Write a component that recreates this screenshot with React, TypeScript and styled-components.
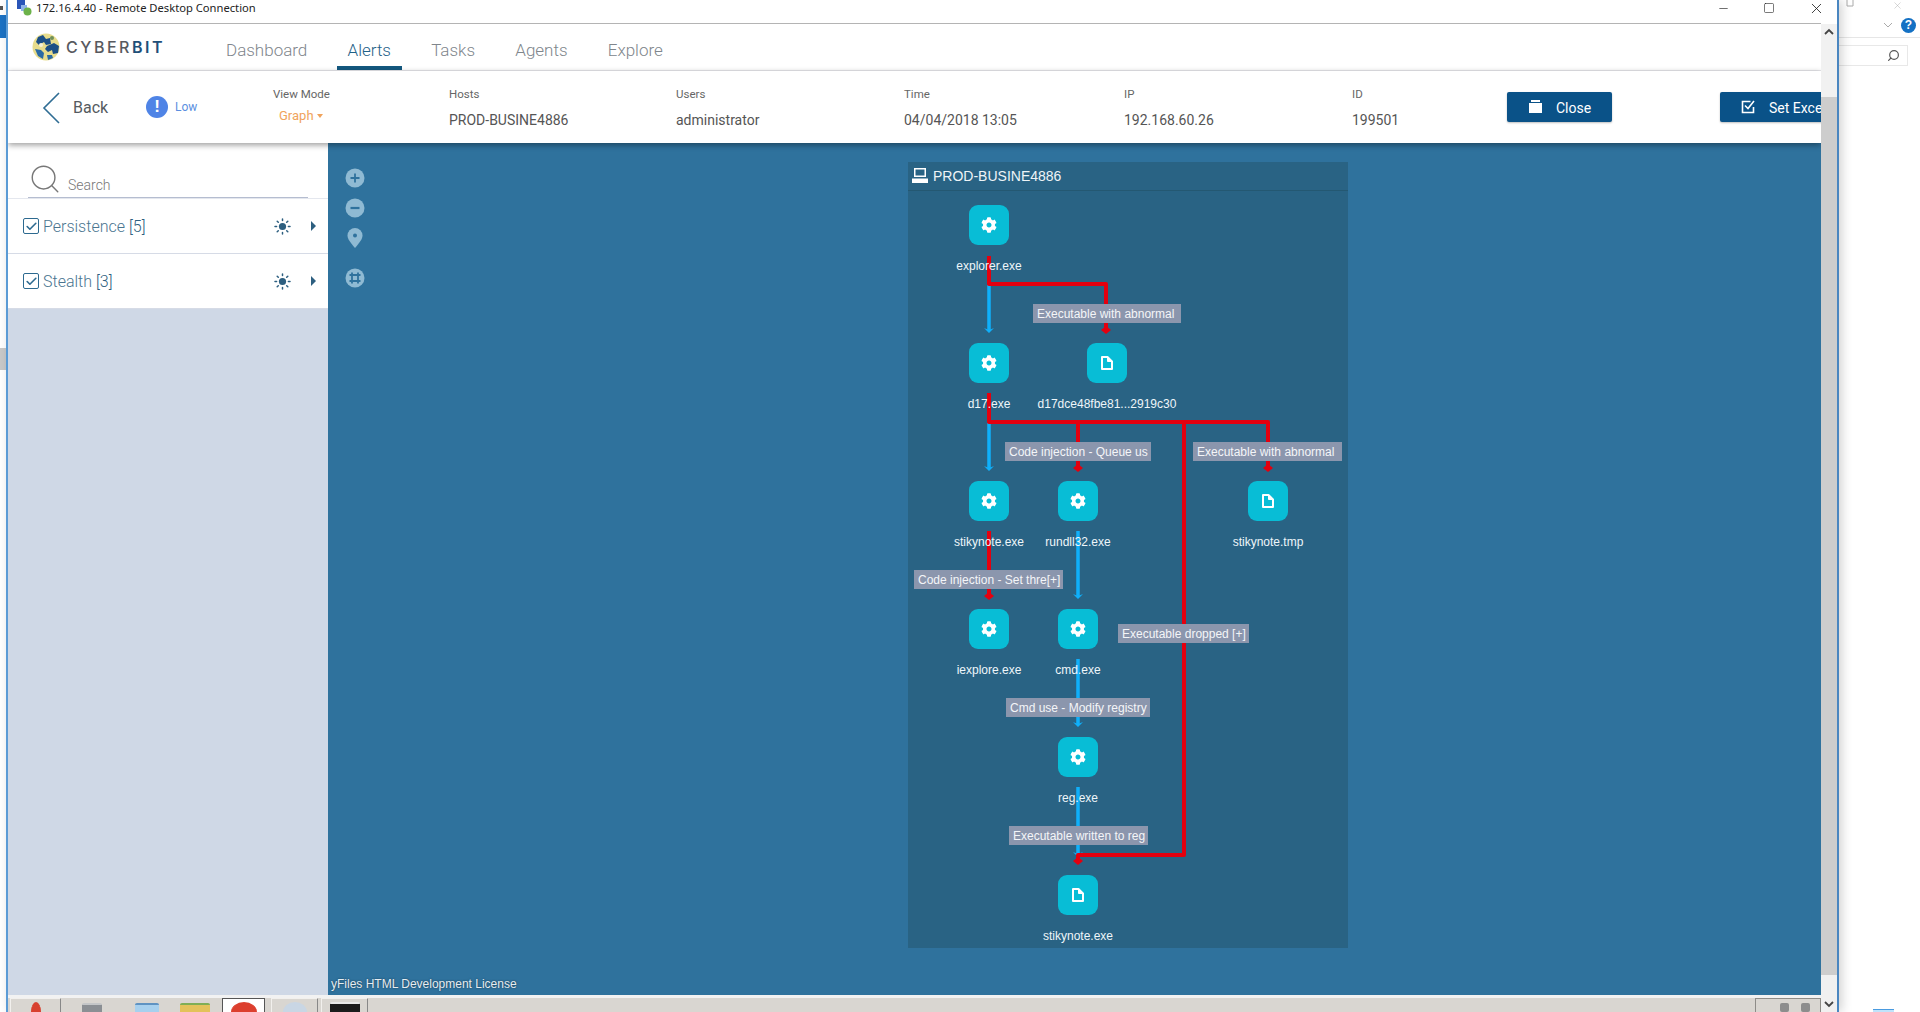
import React from 'react';
import styled, {createGlobalStyle} from 'styled-components';
import {Check, Minus, Search, Square, X} from 'lucide-react';
import {FaCog} from 'react-icons/fa';

const GlobalStyle = createGlobalStyle`
  html, body {
    margin: 0;
    padding: 0;
    background: white;
    font-family: Roboto, "Liberation Sans", sans-serif;
  }
  * { box-sizing: border-box; }
`;

const Desktop = styled.div`
  width: 1920px;
  height: 1012px;
  display: flex;
  overflow: hidden;
  background: white;
`;
const LeftEdge = styled.div`
  width: 6px;
  flex: none;
  display: flex;
  flex-direction: column;
`;
const EdgeDot = styled.div`
  width: 3px;
  height: 4px;
  margin-top: 6px;
  background: #555;
`;
const EdgeBlue = styled.div`
  width: 6px;
  height: 23px;
  margin-top: 5px;
  background: #1b72c4;
`;
const EdgeGrey = styled.div`
  width: 6px;
  height: 22px;
  margin-top: 310px;
  background: #c9c9c9;
`;
const RemoteWindow = styled.div`
  width: 1833px;
  flex: none;
  display: flex;
  flex-direction: column;
  border-left: 2px solid #5b9bd5;
  border-right: 2px solid #4a86c0;
  box-shadow: 3px 0 10px rgba(0, 0, 0, .18);
  z-index: 2;
`;
const TitleBar = styled.div`
  height: 24px;
  flex: none;
  display: flex;
  align-items: flex-start;
  background: white;
  border-bottom: 1px solid #b4b4b4;
  position: relative;
  margin-right: 16px;
`;
const TitleText = styled.div`
  margin: 0 0 0 4px;
  font: 11.2px/16px "Noto Sans", "Open Sans", sans-serif;
  color: #222;
  white-space: nowrap;
`;
const RdpIcon = styled.svg`
  width: 16px;
  height: 16px;
  margin-left: 8px;
  flex: none;
`;
const WindowControls = styled.div`
  margin-left: auto;
  margin-right: -4px;
  display: flex;
  align-items: center;
  gap: 33px;
  height: 16px;
  color: #222;
`;
const Body = styled.div`
  flex: 1;
  display: flex;
  min-height: 0;
`;
const Page = styled.div`
  flex: 1;
  min-width: 0;
  display: flex;
  flex-direction: column;
  overflow: hidden;
`;
const Scrollbar = styled.div`
  width: 16px;
  flex: none;
  margin-top: -24px;
  background: #f0f0f0;
  display: flex;
  flex-direction: column;
  align-items: center;
  position: relative;
  z-index: 3;
`;
const ScrollCap = styled.div`
  height: 97px;
  width: 100%;
  background: linear-gradient(#fff 0 24px, #f1f1f1 24px);
  display: flex;
  align-items: flex-end;
  justify-content: center;
  padding-bottom: 62px;
`;
const ScrollThumb = styled.div`
  width: 100%;
  height: 878px;
  background: #cdcdcd;
`;
const ScrollEnd = styled.div`
  flex: 1;
  display: flex;
  align-items: flex-end;
  justify-content: center;
  padding-bottom: 4px;
`;
const Nav = styled.div`
  height: 47px;
  flex: none;
  display: flex;
  background: white;
  border-bottom: 1px solid #e8e8ec;
`;
const LogoBlock = styled.div`
  width: 207px;
  flex: none;
  display: flex;
  align-items: center;
  padding: 0 0 1px 24px;
  gap: 6px;
`;
const LogoText = styled.div`
  font: 500 16px/16px Inter, "Liberation Sans", sans-serif;
  letter-spacing: 2.5px;
  color: #585a5f;
  > b {
    font-weight: 600;
    color: #1f4f78;
  }
`;
const Tabs = styled.div`
  display: flex;
  gap: 18.2px;
`;
const Tab = styled.div<{ $active?: boolean }>`
  padding: 6px 11px 0;
  font-size: 17px;
  font-weight: 300;
  line-height: 40px;
  height: 46px;
  color: ${p => p.$active ? '#1f6188' : '#80868c'};
  border-bottom: 4px solid ${p => p.$active ? '#13587f' : 'transparent'};
`;
const SubHeader = styled.div`
  height: 72px;
  flex: none;
  display: flex;
  align-items: stretch;
  background: white;
  box-shadow: 0 2px 6px rgba(0, 0, 0, .4);
  position: relative;
  z-index: 2;
  white-space: nowrap;
`;
const BackGroup = styled.div`
  width: 138px;
  flex: none;
  padding: 1px 0 0 34px;
  display: flex;
  align-items: center;
  gap: 13px;
  font-size: 16px;
  color: #555b60;
`;
const SeverityGroup = styled.div`
  width: 127px;
  flex: none;
  display: flex;
  align-items: center;
  gap: 7px;
  font-size: 12px;
  color: #5b8fe0;
`;
const SeverityDot = styled.div`
  width: 22px;
  height: 22px;
  border-radius: 50%;
  background: #4f84e6;
  color: white;
  font: 700 17px/22px "Liberation Sans", sans-serif;
  text-align: center;
`;
const ViewMode = styled.div`
  width: 176px;
  flex: none;
  padding-top: 16px;
  font-size: 11.5px;
  line-height: 14px;
  color: #666;
`;
const GraphSelect = styled.div`
  margin: 8px 0 0 6px;
  display: flex;
  align-items: center;
  gap: 3px;
  font-size: 13px;
  color: #f0a35c;
  &::after {
    content: '';
    border: 3.5px solid transparent;
    border-top: 4px solid #f0a35c;
    border-bottom: 0;
  }
`;
const Field = styled.div<{ $width: number }>`
  width: ${p => p.$width}px;
  flex: none;
  padding-top: 16px;
`;
const FieldLabel = styled.div`
  font-size: 11.5px;
  line-height: 14px;
  color: #666;
`;
const FieldValue = styled.div`
  margin-top: 10px;
  font-size: 14px;
  line-height: 18px;
  color: #555;
`;
const ActionButton = styled.div`
  width: 105px;
  height: 30px;
  margin-top: 21px;
  flex: none;
  display: flex;
  align-items: center;
  padding: 1px 0 0 21px;
  gap: 13px;
  border-radius: 2px;
  background: #0a5288;
  color: white;
  font-size: 14px;
  box-shadow: 0 1px 2px rgba(0, 0, 0, .25);
  > svg { margin-top: -3px; }
`;
const WideButton = styled(ActionButton)`
  width: 160px;
  margin-left: 108px;
`;
const Main = styled.div`
  height: 852px;
  flex: none;
  display: flex;
`;
const Sidebar = styled.div`
  width: 320px;
  flex: none;
  background: #cfd8e6;
`;
const SearchBlock = styled.div`
  height: 56px;
  background: white;
  padding: 0 20px;
  display: flex;
  border-bottom: 1px solid #e4e7ee;
`;
const SearchField = styled.div`
  flex: 1;
  display: flex;
  align-items: flex-start;
  gap: 6px;
  padding-top: 20px;
  border-bottom: 1px solid #b5bdd0;
  font-size: 14px;
  font-weight: 300;
  color: #777;
  > svg { margin-top: -1px; }
  > span { padding-top: 14px; }
`;
const TreeRow = styled.div`
  height: 55px;
  display: flex;
  align-items: center;
  padding: 0 12px 0 15px;
  background: white;
  border-bottom: 1px solid #d6dbe6;
  font-size: 16px;
  font-weight: 300;
  color: #4a7590;
`;
const CheckBox = styled.div`
  width: 16px;
  height: 16px;
  margin-right: 4px;
  display: flex;
  align-items: center;
  justify-content: center;
  border: 1px solid #2d6a90;
  border-radius: 2px;
  color: #2d6a90;
`;
const RowCount = styled.span`
  margin-left: 4px;
  color: #2f5f80;
`;
const RowTools = styled.div`
  margin-left: auto;
  display: flex;
  align-items: center;
  gap: 20px;
`;
const Caret = styled.div`
  width: 0;
  height: 0;
  border: 5px solid transparent;
  border-left: 5px solid #2d5f80;
  border-right: 0;
`;
const Canvas = styled.div`
  flex: 1;
  min-width: 0;
  position: relative;
  display: flex;
  background: #2f729d;
  padding: 19px 0 0 17px;
`;
const GraphTools = styled.div`
  width: 20px;
  flex: none;
  display: flex;
  flex-direction: column;
  align-items: center;
  gap: 10px;
  padding-top: 6px;
`;
const FitTool = styled.div`
  height: 20px;
  margin-top: 10px;
`;
const Panel = styled.div`
  width: 440px;
  height: 786px;
  flex: none;
  margin-left: 543px;
  position: relative;
  background: #296384;
`;
const PanelHeader = styled.div`
  height: 29px;
  display: flex;
  align-items: center;
  gap: 4px;
  padding: 0 0 1px 3px;
  border-bottom: 1px solid #245872;
  color: #eef4f7;
  font: 14px/18px "Liberation Sans", Arial, sans-serif;
`;
const EdgeLayer = styled.svg`
  position: absolute;
  inset: 0;
  width: 440px;
  height: 786px;
`;
const GraphNode = styled.div`
  position: absolute;
  width: 160px;
  margin-left: -80px;
  display: flex;
  flex-direction: column;
  align-items: center;
  color: #eef6fa;
  font: 12px/14px "Liberation Sans", Arial, sans-serif;
`;
const NodeBox = styled.div`
  width: 40px;
  height: 40px;
  display: flex;
  align-items: center;
  justify-content: center;
  border-radius: 9px;
  background: #08bdd6;
  color: white;
  margin-bottom: 14px;
`;
const EdgeLabel = styled.div`
  position: absolute;
  height: 19px;
  padding: 1px 0 0 4px;
  background: #8b96ad;
  color: #f4f5f8;
  font: 12px/18px "Liberation Sans", Arial, sans-serif;
  white-space: nowrap;
`;
const LicenseNote = styled.div`
  position: absolute;
  left: 3px;
  bottom: 3px;
  font: 12px/16px "Liberation Sans", Arial, sans-serif;
  color: #e6edf2;
  text-shadow: 0 0 2px #163547;
`;
const WhiteGap = styled.div`
  height: 3px;
  flex: none;
  background: #f2f2f2;
`;
const Taskbar = styled.div`
  flex: 1;
  display: flex;
  align-items: flex-start;
  background: #d9d6d1;
  padding-left: 2px;
  overflow: hidden;
`;
const TaskButton = styled.div<{ $width: number; $gap?: number; $selected?: boolean }>`
  width: ${p => p.$width}px;
  height: 20px;
  margin-left: ${p => p.$gap || 0}px;
  flex: none;
  display: flex;
  justify-content: center;
  padding-top: 3px;
  border: 1px solid ${p => p.$selected ? '#555' : '#f2f0ed'};
  border-right-color: ${p => p.$selected ? '#555' : '#888'};
  background: ${p => p.$selected ? 'white' : 'transparent'};
`;
const TaskGlyph = styled.div<{ $color: string; $width: number; $round?: boolean; $edge?: string }>`
  width: ${p => p.$width}px;
  height: 20px;
  flex: none;
  background: ${p => p.$color};
  border-radius: ${p => p.$round ? '50%' : '2px'};
  border-top: 2px solid ${p => p.$edge || p.$color};
`;
const TaskIcon = styled.div<{ $ml: number }>`
  margin: 5px 0 0 ${p => p.$ml}px;
  flex: none;
`;
const TrayBox = styled.div`
  width: 66px;
  height: 20px;
  margin-left: auto;
  flex: none;
  border: 1px solid #8e8c88;
  display: flex;
  justify-content: flex-end;
  gap: 12px;
  padding: 4px 10px 0 0;
`;
const TrayDot = styled.div`
  width: 9px;
  height: 9px;
  background: #8d8d8d;
  border-radius: 2px;
`;
const RightWindow = styled.div`
  flex: 1;
  min-width: 0;
  display: flex;
  flex-direction: column;
  background: white;
  color: #aaa;
`;
const RightTop = styled.div`
  height: 13px;
  display: flex;
  justify-content: space-between;
  padding: 0 17px 0 6px;
  align-items: flex-start;
`;
const RightMeta = styled.div`
  height: 25px;
  display: flex;
  justify-content: flex-end;
  align-items: center;
  gap: 8px;
  padding: 0 4px 0 0;
  border-bottom: 1px solid #e6e6e6;
`;
const HelpBadge = styled.div`
  width: 15px;
  height: 15px;
  border-radius: 50%;
  background: #1471c4;
  color: white;
  font: 700 12px/15px "Liberation Sans", sans-serif;
  text-align: center;
`;
const RightSearch = styled.div`
  height: 21px;
  width: 69px;
  margin-top: 7px;
  display: flex;
  align-items: center;
  justify-content: flex-end;
  padding-right: 7px;
  border: 1px solid #e8e8e8;
  border-left: 0;
  color: #555;
`;
const RightFill = styled.div`
  flex: 1;
`;
const LangBox = styled.div`
  width: 21px;
  height: 3px;
  margin-left: 34px;
  background: #bfe3fb;
  border-top: 1px solid #4a9be0;
`;

type Pt = [number, number];

const OX = 908;
const OY = 162;

// screen coordinates, the svg viewBox moves them into the panel
const blueEdges: Pt[][] = [
  [[989, 285], [989, 331]],
  [[989, 423], [989, 469]],
  [[1078, 531], [1078, 597]],
  [[1078, 659], [1078, 725]],
  [[1078, 787], [1078, 855]],
];
const redEdges: Pt[][] = [
  [[989, 256], [989, 284], [1106, 284], [1106, 331]],
  [[989, 393], [989, 422], [1268, 422], [1268, 469]],
  [[1078, 422], [1078, 469]],
  [[1184, 422], [1184, 855], [1078, 855], [1078, 862]],
  [[989, 531], [989, 597]],
];

const toPoints = (pts: Pt[]) => pts.map(p => p.join(',')).join(' ');
const blueHead = ([x, y]: Pt) =>
  `${x - 5},${y - 3} ${x},${y - 1} ${x + 5},${y - 3} ${x},${y + 2}`;
const redHead = ([x, y]: Pt) =>
  `${x - 5},${y - 1} ${x},${y - 5} ${x + 5},${y - 1} ${x},${y + 3}`;

const nodes = [
  {x: 989, y: 225, label: 'explorer.exe', kind: 'proc'},
  {x: 989, y: 363, label: 'd17.exe', kind: 'proc'},
  {x: 1107, y: 363, label: 'd17dce48fbe81...2919c30', kind: 'file'},
  {x: 989, y: 501, label: 'stikynote.exe', kind: 'proc'},
  {x: 1078, y: 501, label: 'rundll32.exe', kind: 'proc'},
  {x: 1268, y: 501, label: 'stikynote.tmp', kind: 'file'},
  {x: 989, y: 629, label: 'iexplore.exe', kind: 'proc'},
  {x: 1078, y: 629, label: 'cmd.exe', kind: 'proc'},
  {x: 1078, y: 757, label: 'reg.exe', kind: 'proc'},
  {x: 1078, y: 895, label: 'stikynote.exe', kind: 'file'},
];
const labels = [
  {x: 1033, y: 304, w: 148, text: 'Executable with abnormal'},
  {x: 1005, y: 442, w: 146, text: 'Code injection - Queue us'},
  {x: 1193, y: 442, w: 149, text: 'Executable with abnormal'},
  {x: 914, y: 570, w: 149, text: 'Code injection - Set thre[+]'},
  {x: 1118, y: 624, w: 131, text: 'Executable dropped [+]'},
  {x: 1006, y: 698, w: 144, text: 'Cmd use - Modify registry'},
  {x: 1009, y: 826, w: 139, text: 'Executable written to reg'},
];
const tree = [
  {name: 'Persistence', count: 5},
  {name: 'Stealth', count: 3},
];

const FileIcon = () => (
  <svg width="14" height="16" viewBox="0 0 14 16">
    <path d="M2 2h5.500L12 6.500V14H2z" fill="none" stroke="white" strokeWidth="2" strokeLinejoin="round"/>
    <path d="M7.500 2v4.500H12z" fill="white" stroke="white" strokeWidth="1"/>
  </svg>
);

const SpreadIcon = () => (
  <svg width="17" height="17" viewBox="0 0 17 17" fill="#2d5f80">
    <circle cx="8.500" cy="8.500" r="3.600"/>
    <g stroke="#2d5f80" strokeWidth="1.500" strokeLinecap="round">
      <path d="M8.500 1v1.600M8.500 14.400V16M1 8.500h1.600M14.400 8.500H16M3.200 3.200l1.100 1.100M12.700 12.700l1.100 1.100M3.200 13.800l1.100-1.100M12.700 4.300l1.100-1.100"/>
    </g>
  </svg>
);

const ToolButton = ({children}: { children: React.ReactNode }) => (
  <svg width="20" height="20" viewBox="0 0 20 20">
    <circle cx="10" cy="10" r="9.500" fill="#8fbad3"/>
    {children}
  </svg>
);

const LogoMark = () => (
  <svg width="28" height="28" viewBox="0 0 28 28">
    <circle cx="14" cy="14" r="13.500" fill="#e7dc8c"/>
    <path d="M6 4l5-2 3 4 4-1 1 6-5 1-2-3-5 3-3-3z" fill="#1c4f86"/>
    <path d="M15 13l7-3 5 3-1 7-5 1-1-4-4 2-3-3z" fill="#1c4f86"/>
    <path d="M3 16l6 1 3 3-1 6-5-3z" fill="#2a6aa4"/>
    <path d="M15 22l5 0 1 3-5 2z" fill="#2a6aa4"/>
    <circle cx="9" cy="12" r="2" fill="#f4f0d8"/>
    <circle cx="20" cy="5" r="2" fill="#6d8f5a"/>
  </svg>
);

function App() {
  return (
    <Desktop>
      <GlobalStyle/>
      <LeftEdge>
        <EdgeDot/>
        <EdgeBlue/>
        <EdgeGrey/>
      </LeftEdge>
      <RemoteWindow>
        <TitleBar>
          <RdpIcon viewBox="0 0 16 16">
            <rect x="1" y="0" width="8" height="9" fill="#2a55b8"/>
            <rect x="5" y="5" width="6" height="6" fill="#8fb4e8"/>
            <circle cx="11.500" cy="11.500" r="4" fill="#6cb24a"/>
          </RdpIcon>
          <TitleText>172.16.4.40 - Remote Desktop Connection</TitleText>
          <WindowControls>
            <Minus size={13} strokeWidth={1.2}/>
            <Square size={12} strokeWidth={1.2}/>
            <X size={17} strokeWidth={1.2}/>
          </WindowControls>
        </TitleBar>
        <Body>
          <Page>
            <Nav>
              <LogoBlock>
                <LogoMark/>
                <LogoText>CYBER<b>BIT</b></LogoText>
              </LogoBlock>
              <Tabs>
                <Tab>Dashboard</Tab>
                <Tab $active>Alerts</Tab>
                <Tab>Tasks</Tab>
                <Tab>Agents</Tab>
                <Tab>Explore</Tab>
              </Tabs>
            </Nav>
            <SubHeader>
              <BackGroup>
                <svg width="18" height="34" viewBox="0 0 18 34">
                  <path d="M17 2L2 17l15 15" fill="none" stroke="#2f6d94" strokeWidth="1.600"/>
                </svg>
                Back
              </BackGroup>
              <SeverityGroup>
                <SeverityDot>!</SeverityDot>
                Low
              </SeverityGroup>
              <ViewMode>
                View Mode
                <GraphSelect>Graph</GraphSelect>
              </ViewMode>
              <Field $width={227}>
                <FieldLabel>Hosts</FieldLabel>
                <FieldValue>PROD-BUSINE4886</FieldValue>
              </Field>
              <Field $width={228}>
                <FieldLabel>Users</FieldLabel>
                <FieldValue>administrator</FieldValue>
              </Field>
              <Field $width={220}>
                <FieldLabel>Time</FieldLabel>
                <FieldValue>04/04/2018 13:05</FieldValue>
              </Field>
              <Field $width={228}>
                <FieldLabel>IP</FieldLabel>
                <FieldValue>192.168.60.26</FieldValue>
              </Field>
              <Field $width={155}>
                <FieldLabel>ID</FieldLabel>
                <FieldValue>199501</FieldValue>
              </Field>
              <ActionButton>
                <svg width="15" height="15" viewBox="0 0 15 15" fill="white">
                  <path d="M1 4h13v10H1z"/>
                  <path d="M3 1h9v2H3z"/>
                </svg>
                Close
              </ActionButton>
              <WideButton>
                <svg width="15" height="15" viewBox="0 0 15 15" fill="none" stroke="white" strokeWidth="1.600">
                  <path d="M12.500 8v5.500h-11v-11h8"/>
                  <path d="M4 6.500l3 3 6-7.500"/>
                </svg>
                Set Exception
              </WideButton>
            </SubHeader>
            <Main>
              <Sidebar>
                <SearchBlock>
                  <SearchField>
                    <Search size={34} strokeWidth={1}/>
                    <span>Search</span>
                  </SearchField>
                </SearchBlock>
                {tree.map(row => <TreeRow key={row.name}>
                  <CheckBox><Check size={13} strokeWidth={3}/></CheckBox>
                  {row.name}
                  <RowCount>[{row.count}]</RowCount>
                  <RowTools>
                    <SpreadIcon/>
                    <Caret/>
                  </RowTools>
                </TreeRow>)}
              </Sidebar>
              <Canvas>
                <GraphTools>
                  <ToolButton>
                    <path d="M10 5.500v9M5.500 10h9" stroke="#2f729d" strokeWidth="1.800"/>
                  </ToolButton>
                  <ToolButton>
                    <path d="M5.500 10h9" stroke="#2f729d" strokeWidth="2.200"/>
                  </ToolButton>
                  <svg width="16" height="20" viewBox="0 0 16 20">
                    <path d="M8 20C3 14 .5 11 .5 7.500a7.500 7.500 0 0 1 15 0C15.500 11 13 14 8 20z" fill="#8fbad3"/>
                    <circle cx="8" cy="7.500" r="2" fill="#2f729d"/>
                  </svg>
                  <FitTool>
                    <ToolButton>
                      <path d="M7 4.500v11M13 4.500v11M4.500 7h11M4.500 13h11" stroke="#2f729d" strokeWidth="1.800"/>
                    </ToolButton>
                  </FitTool>
                </GraphTools>
                <Panel>
                  <PanelHeader>
                    <svg width="18" height="17" viewBox="0 0 18 17" fill="white">
                      <path d="M3 1h12v9H3zM4.500 2.500v6h9v-6z" fillRule="evenodd"/>
                      <path d="M1 11.500h16V16H1z"/>
                    </svg>
                    PROD-BUSINE4886
                  </PanelHeader>
                  <EdgeLayer viewBox={`${OX} ${OY} 440 786`}>
                    {blueEdges.map((e, i) => <g key={i}>
                      <polyline points={toPoints(e)} fill="none" stroke="#0fb0fb" strokeWidth="3.500"/>
                      <polygon points={blueHead(e[e.length - 1])} fill="#0fb0fb"/>
                    </g>)}
                    {redEdges.map((e, i) => <g key={i}>
                      <polyline points={toPoints(e)} fill="none" stroke="#e3000f" strokeWidth="4" strokeLinejoin="round"/>
                      <polygon points={redHead(e[e.length - 1])} fill="#e3000f"/>
                    </g>)}
                  </EdgeLayer>
                  {nodes.map(n => <GraphNode key={n.x + '-' + n.y} style={{left: n.x - OX, top: n.y - 20 - OY}}>
                    <NodeBox>{n.kind === 'proc' ? <FaCog size={16}/> : <FileIcon/>}</NodeBox>
                    {n.label}
                  </GraphNode>)}
                  {labels.map(l => <EdgeLabel key={l.x + '-' + l.y} style={{left: l.x - OX, top: l.y - OY, width: l.w}}>
                    {l.text}
                  </EdgeLabel>)}
                </Panel>
                <LicenseNote>yFiles HTML Development License</LicenseNote>
              </Canvas>
            </Main>
            <WhiteGap/>
            <Taskbar>
              <TaskButton $width={51}>
                <TaskGlyph $color="#d8402f" $width={10} $round/>
              </TaskButton>
              <TaskIcon $ml={21}><TaskGlyph $color="#8b8f94" $width={20} $edge="#c4c6c8"/></TaskIcon>
              <TaskIcon $ml={33}><TaskGlyph $color="#a7d0ee" $width={24} $edge="#5f93c2"/></TaskIcon>
              <TaskIcon $ml={21}><TaskGlyph $color="#e3c25a" $width={30} $edge="#7fae55"/></TaskIcon>
              <TaskButton $width={43} $gap={12} $selected>
                <TaskGlyph $color="#dc3f2e" $width={26} $round/>
              </TaskButton>
              <TaskButton $width={47} $gap={6}>
                <TaskGlyph $color="#c9d6e4" $width={24} $round/>
              </TaskButton>
              <TaskButton $width={47} $gap={3}>
                <TaskGlyph $color="#1b1b1b" $width={30} $edge="#e8e8e8"/>
              </TaskButton>
              <TrayBox>
                <TrayDot/>
                <TrayDot/>
              </TrayBox>
            </Taskbar>
          </Page>
          <Scrollbar>
            <ScrollCap>
              <svg width="10" height="7" viewBox="0 0 10 7" fill="none" stroke="#444" strokeWidth="1.800">
                <path d="M1 6l4-4 4 4"/>
              </svg>
            </ScrollCap>
            <ScrollThumb/>
            <ScrollEnd>
              <svg width="10" height="7" viewBox="0 0 10 7" fill="none" stroke="#444" strokeWidth="1.800">
                <path d="M1 1l4 4 4-4"/>
              </svg>
            </ScrollEnd>
          </Scrollbar>
        </Body>
      </RemoteWindow>
      <RightWindow>
        <RightTop>
          <svg width="10" height="7" viewBox="0 0 10 7" fill="none" stroke="#aaa">
            <path d="M2 0v6h6V0"/>
          </svg>
          <X size={11} strokeWidth={1}/>
        </RightTop>
        <RightMeta>
          <svg width="10" height="6" viewBox="0 0 10 6" fill="none" stroke="#aaa">
            <path d="M1 1l4 4 4-4"/>
          </svg>
          <HelpBadge>?</HelpBadge>
        </RightMeta>
        <RightSearch>
          <Search size={13} strokeWidth={2.2} style={{transform: 'scaleX(-1)'}}/>
        </RightSearch>
        <RightFill/>
        <LangBox/>
      </RightWindow>
    </Desktop>
  );
}

export default App;
